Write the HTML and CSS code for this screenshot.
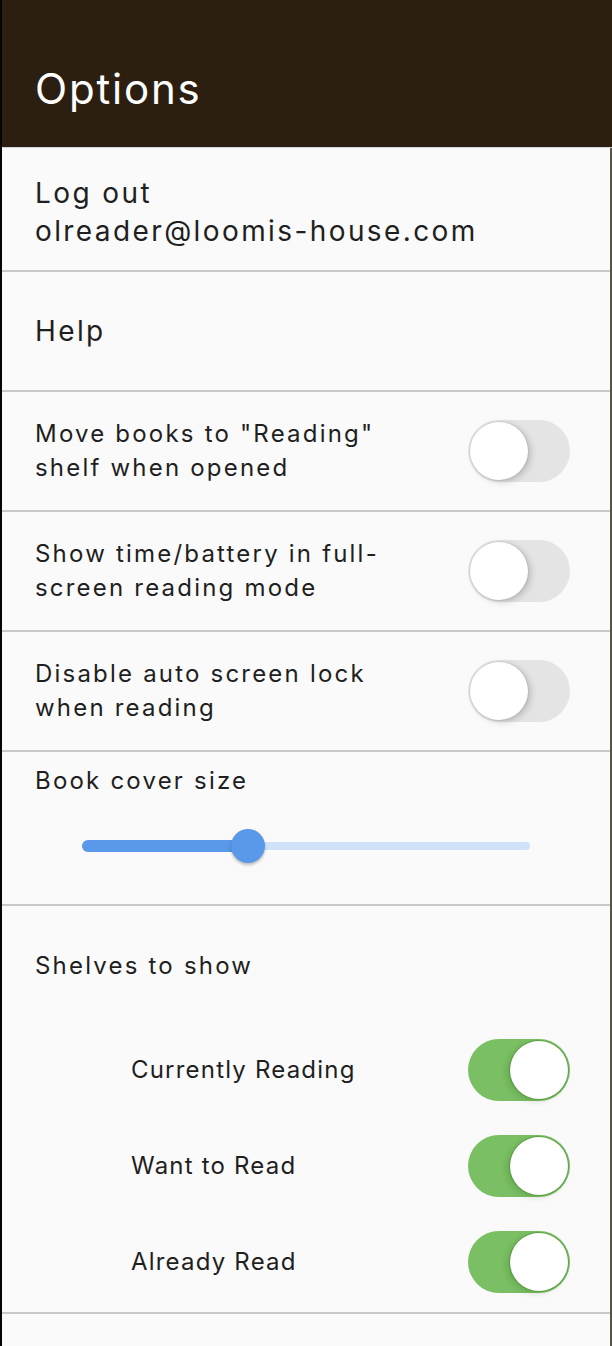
FILE: index.html
```html
<!DOCTYPE html>
<html lang="en">
<head>
<meta charset="utf-8">
<title>Options</title>
<link rel="stylesheet" href="styles.css">
</head>
<body>
<div class="app">
  <header class="appbar">
    <h1 class="title">Options</h1>
  </header>
  <main class="content">
    <section class="item item-logout">
      <div class="big-text">Log out<br>olreader@loomis-house.com</div>
    </section>
    <section class="item item-help">
      <div class="big-text">Help</div>
    </section>
    <section class="item setting">
      <div class="label">Move books to "Reading"<br>shelf when opened</div>
      <div class="switch"><div class="knob"></div></div>
    </section>
    <section class="item setting">
      <div class="label">Show time/battery in full-<br>screen reading mode</div>
      <div class="switch"><div class="knob"></div></div>
    </section>
    <section class="item setting">
      <div class="label">Disable auto screen lock<br>when reading</div>
      <div class="switch"><div class="knob"></div></div>
    </section>
    <section class="item cover">
      <div class="label">Book cover size</div>
      <div class="slider">
        <div class="track-active"></div>
        <div class="thumb"></div>
        <div class="track-rest"></div>
      </div>
    </section>
    <section class="item shelves">
      <div class="label shelves-title">Shelves to show</div>
      <div class="shelf-row">
        <div class="shelf-label">Currently Reading</div>
        <div class="switch on"><div class="knob"></div></div>
      </div>
      <div class="shelf-row">
        <div class="shelf-label">Want to Read</div>
        <div class="switch on"><div class="knob"></div></div>
      </div>
      <div class="shelf-row">
        <div class="shelf-label">Already Read</div>
        <div class="switch on"><div class="knob"></div></div>
      </div>
    </section>
  </main>
</div>
</body>
</html>
```
FILE: styles.css
```css
html, body {
  margin: 0;
  padding: 0;
}
body {
  background: #050505;
  font-family: Inter, Roboto, "Liberation Sans", sans-serif;
  color: #1f1f1f;
}
.app {
  margin-left: 2px;
  width: 610px;
  min-height: 1346px;
  background: #fafafa;
  display: flex;
  flex-direction: column;
}
.appbar {
  height: 148px;
  background: #2c1f12;
  border-bottom: 1px solid #d6d6d6;
  display: flex;
  align-items: center;
  padding: 30px 0 0 33px;
  box-sizing: border-box;
}
.title {
  margin: 0;
  color: #ffffff;
  font-weight: 400;
  font-size: 42px;
  letter-spacing: 1.8px;
  line-height: 50px;
}
.content {
  flex: 1;
  border-right: 2px solid #55554b;
  display: flex;
  flex-direction: column;
}
.item {
  border-bottom: 2px solid #c8c8c8;
  padding: 0 40px 0 33px;
  box-sizing: border-box;
}
.big-text {
  font-size: 28px;
  line-height: 38px;
  letter-spacing: 2.4px;
}
.item-logout {
  height: 124px;
  display: flex;
  align-items: center;
  padding-top: 6px;
}
.item-help {
  height: 120px;
  display: flex;
  align-items: center;
}
.label {
  font-size: 24px;
  line-height: 34px;
  letter-spacing: 2.2px;
}
.setting {
  height: 120px;
  display: flex;
  align-items: center;
  justify-content: space-between;
}
.switch {
  width: 102px;
  height: 62px;
  border-radius: 31px;
  background: #e4e4e4;
  display: flex;
  align-items: center;
  padding: 0 2px;
  box-sizing: border-box;
  flex-shrink: 0;
}
.knob {
  width: 58px;
  height: 58px;
  border-radius: 50%;
  background: #ffffff;
  box-shadow: 0 0 0 1px rgba(0,0,0,0.06), 3px 2px 6px rgba(0,0,0,0.18);
}
.switch.on {
  background: #7abf63;
  justify-content: flex-end;
}
.switch.on .knob {
  box-shadow: 0 0 0 1px rgba(60,120,40,0.35), -3px 2px 6px rgba(40,90,20,0.22);
}
.cover {
  height: 154px;
  padding-top: 12px;
}
.slider {
  margin: 31px 0 0 47px;
  width: 448px;
  height: 34px;
  display: flex;
  align-items: center;
}
.track-active {
  width: 166px;
  height: 12px;
  border-radius: 6px 0 0 6px;
  background: #5a98ea;
}
.thumb {
  width: 34px;
  height: 34px;
  border-radius: 50%;
  background: #5a98ea;
  margin: 0 -17px;
  position: relative;
  z-index: 1;
  box-shadow: 0 2px 3px rgba(0,0,0,0.25);
}
.track-rest {
  flex: 1;
  height: 8px;
  border-radius: 0 4px 4px 0;
  background: #cfe2f8;
}
.shelves {
  height: 408px;
  padding-top: 43px;
}
.shelves-title {
  margin-bottom: 39px;
}
.shelf-row {
  height: 96px;
  display: flex;
  align-items: center;
  justify-content: space-between;
  padding-left: 96px;
}
.shelf-label {
  font-size: 24px;
  line-height: 34px;
  letter-spacing: 1.2px;
}
```
